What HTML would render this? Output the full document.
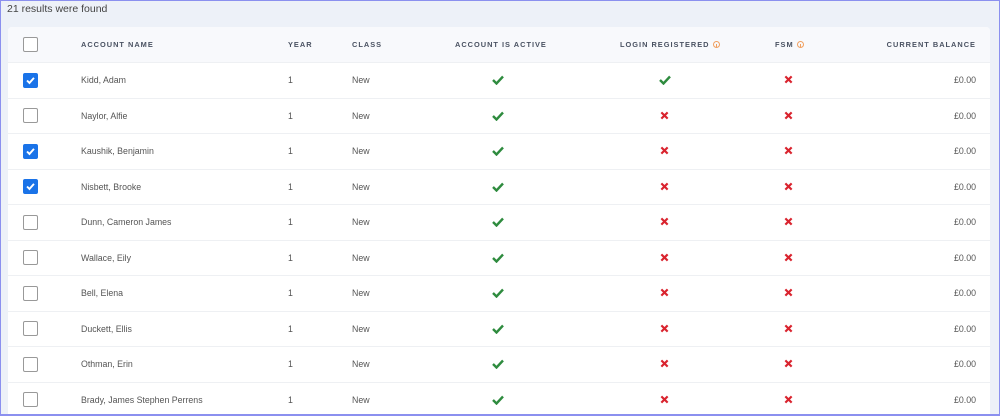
<!DOCTYPE html>
<html><head><style>
*{margin:0;padding:0;box-sizing:border-box}
html,body{width:1000px;height:416px;overflow:hidden}
body{background:#edf1f8;font-family:"Liberation Sans",sans-serif;position:relative}
.frame{position:absolute;left:0;top:0;width:1000px;height:416px;border:1px solid #8b90ef;border-bottom:none;z-index:5;pointer-events:none}
.bottom{position:absolute;left:0;top:414px;width:1000px;height:2px;background:#8b90ef;z-index:6}
.found{position:absolute;left:7px;top:3px;font-size:10.5px;color:#444}
.card{position:absolute;left:8px;top:27px;width:982px;height:387px;background:#fff;border-radius:4px 4px 0 0;overflow:hidden}
.hdr{position:absolute;left:0;top:0;width:982px;height:35px;background:#f8f9fc}
.row{position:absolute;left:0;width:982px;height:35.5px;border-top:1px solid #eef0f3}
.t{position:absolute;font-size:8.8px;color:#555;white-space:nowrap}
.h{position:absolute;font-size:7.4px;font-weight:bold;letter-spacing:1px;color:#4a5262;white-space:nowrap}
.cb{position:absolute;left:15px;width:15px;height:15px;border:1px solid #999;border-radius:2px;background:#fff}
.cb.on{background:#1a73e8;border-color:#1a73e8}
.cb svg{display:block}
.ic{position:absolute;top:12px}
.ic svg{display:block}
.info{display:inline-block;width:7px;height:7px;border:1px solid #f0a060;border-radius:50%;margin-left:3px;vertical-align:-1px;position:relative}
.info:after{content:"";position:absolute;left:2px;top:1.5px;width:1px;height:3px;background:#f0a060}
</style></head><body>
<div class="frame"></div><div class="bottom"></div>
<div class="found">21 results were found</div>
<div class="card" id="c">
<div class="hdr">
<div class="cb" style="top:10px"></div>
<div class="h" style="left:73px;top:13px">ACCOUNT NAME</div>
<div class="h" style="left:280px;top:13px">YEAR</div>
<div class="h" style="left:344px;top:13px">CLASS</div>
<div class="h" style="left:447px;top:13px">ACCOUNT IS ACTIVE</div>
<div class="h" style="left:612px;top:13px">LOGIN REGISTERED<span class="info"></span></div>
<div class="h" style="left:767px;top:13px">FSM<span class="info"></span></div>
<div class="h" style="right:14px;top:13px">CURRENT BALANCE</div>
</div>
</div>
<script>
var d=[["Kidd, Adam",1,1],["Naylor, Alfie",0,0],["Kaushik, Benjamin",1,0],["Nisbett, Brooke",1,0],["Dunn, Cameron James",0,0],["Wallace, Eily",0,0],["Bell, Elena",0,0],["Duckett, Ellis",0,0],["Othman, Erin",0,0],["Brady, James Stephen Perrens",0,0]];
var tick='<svg viewBox="0 0 12 10" width="12" height="10"><path d="M1 5 L4.5 8.5 L11 1.5" stroke="#2e8b3e" stroke-width="2.4" fill="none"/></svg>';
var x='<svg viewBox="0 0 10 10" width="9" height="9"><path d="M1.5 1.5 L8.5 8.5 M8.5 1.5 L1.5 8.5" stroke="#d9232e" stroke-width="2.4" fill="none"/></svg>';
var h='';
d.forEach(function(r,i){
var top=35+i*35.5;
h+='<div class="row" style="top:'+top+'px">'+
'<div class="cb'+(r[1]?' on':'')+'" style="top:9.5px">'+(r[1]?'<svg viewBox="0 0 15 15" width="13" height="13"><path d="M3.5 7.5 L6.3 10.3 L11.5 4.5" stroke="#fff" stroke-width="2.2" fill="none"/></svg>':'')+'</div>'+
'<div class="t" style="left:73px;top:12px">'+r[0]+'</div>'+
'<div class="t" style="left:280px;top:12px">1</div>'+
'<div class="t" style="left:344px;top:12px">New</div>'+
'<div class="ic" style="left:484px">'+tick+'</div>'+
'<div class="ic" style="left:'+(r[2]?651:652)+'px">'+(r[2]?tick:x)+'</div>'+
'<div class="ic" style="left:776px">'+x+'</div>'+
'<div class="t" style="right:14px;top:12px">£0.00</div></div>';
});
document.getElementById('c').insertAdjacentHTML('beforeend',h);
</script>
</body></html>
